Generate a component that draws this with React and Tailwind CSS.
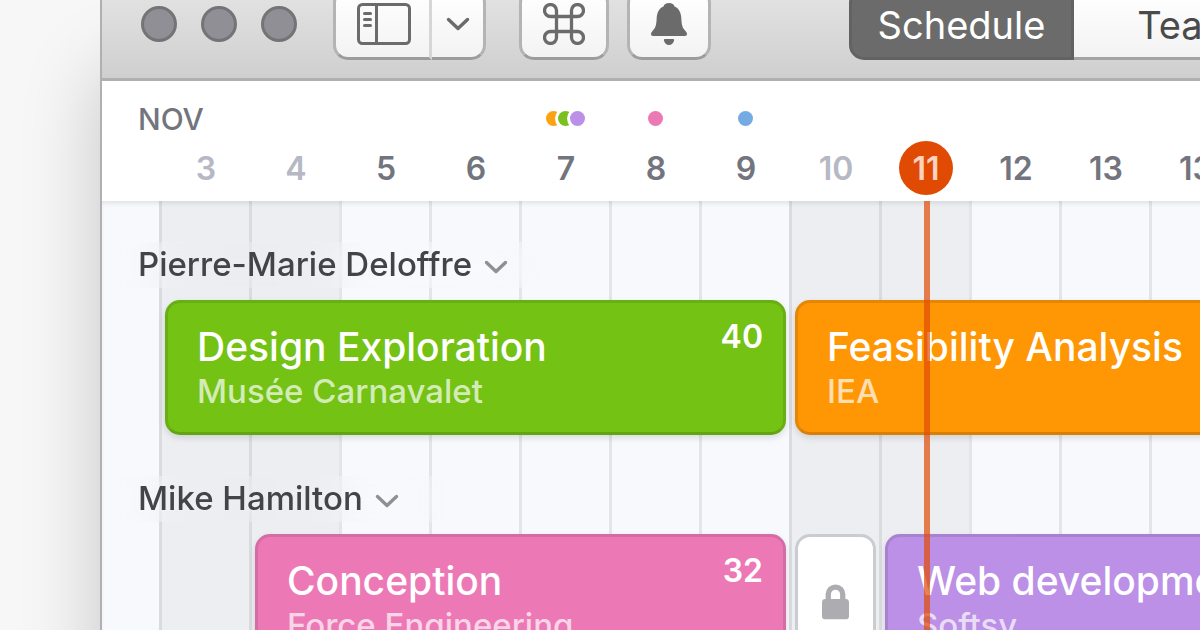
import React, { useState } from 'react'

const days = [
    { day: 3, off: true },
    { day: 4, off: true },
    { day: 5 },
    { day: 6 },
    { day: 7, dots: ['bg-[#fca314]', 'bg-[#7ac11f]', 'bg-[#bb90e6]'] },
    { day: 8, dots: ['bg-[#ec79b5]'] },
    { day: 9, dots: ['bg-[#74abe2]'] },
    { day: 10, off: true },
    { day: 11, off: true, today: true },
    { day: 12 },
    { day: 13 },
    { day: 13 },
    { day: 15 },
    { day: 16 },
    { day: 17, off: true },
    { day: 18, off: true }
]

const people = [
    {
        name: 'Pierre-Marie Deloffre',
        tasks: [
            { title: 'Design Exploration', client: 'Musée Carnavalet', hours: 40, span: 'col-[1/8]', color: 'bg-[#73c214]' },
            { title: 'Feasibility Analysis', client: 'IEA', span: 'col-[8/15]', color: 'bg-[#ff9604]' }
        ]
    },
    {
        name: 'Mike Hamilton',
        tasks: [
            { title: 'Conception', client: 'Force Engineering', hours: 32, span: 'col-[2/8]', color: 'bg-[#ec79b5]' },
            { locked: true, span: 'col-[8/9]' },
            { title: 'Web development', client: 'Softsy', span: 'col-[9/15]', color: 'bg-[#bb90e6]' }
        ]
    }
]

const Chevron = () => (
    <svg width="24" height="14" viewBox="0 0 24 14" fill="none" stroke="currentColor" strokeWidth="3.400" strokeLinecap="round" strokeLinejoin="round">
        <path d="M2.500 2.500 12 11.500 21.500 2.500" />
    </svg>
)

const SidebarIcon = () => (
    <svg width="54" height="42" viewBox="0 0 54 42" fill="none" stroke="currentColor" strokeWidth="3" strokeLinecap="round">
        <rect x="1.5" y="1.5" width="51" height="39" rx="4" />
        <path d="M19.500 2v38M7.500 10.500h6M7.500 16.500h6M7.500 22.500h6" />
    </svg>
)

const CommandIcon = () => (
    <svg width="42" height="42" viewBox="0 0 42 42" fill="none" stroke="currentColor" strokeWidth="3.300">
        <path d="M13.500 13.500h15v15h-15zM13.500 13.500v-6a6 6 0 1 0-6 6zM28.500 13.500h6a6 6 0 1 0-6-6zM28.500 28.500v6a6 6 0 1 0 6-6zM13.500 28.500h-6a6 6 0 1 0 6 6z" />
    </svg>
)

const BellIcon = () => (
    <svg width="36" height="42" viewBox="0 0 36 42" fill="currentColor">
        <path d="M18 0c-3 0-5 1.500-5.500 3.500C8 5.500 6 9.500 5.700 15 5.400 22 4.500 25 1.500 28 .5 29 0 30 0 31c0 1.200.8 2 2 2h32c1.200 0 2-.8 2-2 0-1-.5-2-1.500-3-3-3-3.900-6-4.200-13C30 9.500 28 5.500 23.500 3.500 23 1.500 21 0 18 0z" />
        <path d="M14 36h8c.8 0 1.300.6 1.100 1.400C22.500 40 20.500 42 18 42s-4.500-2-5.100-4.600C12.700 36.600 13.200 36 14 36z" />
    </svg>
)

const LockIcon = () => (
    <svg width="27" height="36" viewBox="0 0 28 36" fill="none">
        <path d="M6.500 18v-8a7.500 7.500 0 0 1 15 0v8" stroke="#adacb0" strokeWidth="5.500" />
        <rect y="15" width="28" height="21" rx="3.500" fill="#adacb0" />
    </svg>
)

const toolButton = 'flex items-center justify-center h-[72px] border-[3px] border-[#b4b4b4] border-b-[#9c9c9c] bg-linear-to-b from-white to-[#f3f3f3] text-[#6b6b6b]'

function Toolbar({ tab, setTab }) {
    return (
        <header className="flex items-center h-[111px] shrink-0 pl-[39px] border-b-[3px] border-[#b0b0b0] bg-linear-to-b from-[#e8e8e8] to-[#cfcfcf]">
            <div className="flex gap-6 mr-9 shrink-0">
                <button aria-label="Close" className="size-9 rounded-full border-[3px] border-[#747476] bg-[#908f95]" />
                <button aria-label="Minimize" className="size-9 rounded-full border-[3px] border-[#747476] bg-[#908f95]" />
                <button aria-label="Zoom" className="size-9 rounded-full border-[3px] border-[#747476] bg-[#908f95]" />
            </div>
            <div className="flex mr-[33px] shrink-0">
                <button aria-label="Sidebar" className={`${toolButton} w-[99px] pl-0.5 rounded-l-[15px] border-r-[#d6d6d6]`}><SidebarIcon /></button>
                <button aria-label="Sidebar options" className={`${toolButton} w-[54px] rounded-r-[15px] border-l-0`}><Chevron /></button>
            </div>
            <button aria-label="Shortcuts" className={`${toolButton} w-[90px] mr-[18px] shrink-0 rounded-[15px]`}><CommandIcon /></button>
            <button aria-label="Notifications" className={`${toolButton} w-[84px] mr-[138px] shrink-0 rounded-[15px]`}><BellIcon /></button>
            <div className="flex shrink-0 text-[38px]">
                {['Schedule', 'Team'].map((label) => (
                    <button
                        key={label}
                        onClick={() => setTab(label)}
                        className={`w-[225px] h-[72px] pt-0.5 border-[3px] first:rounded-l-[15px] last:rounded-r-[15px] ${tab === label ? 'border-[#626262] bg-[#6b6b6b] text-white' : 'border-x-0 border-[#b4b4b4] border-b-[#a4a4a4] bg-linear-to-b from-white to-[#f3f3f3] text-[#4a4a4a]'}`}
                    >
                        {label}
                    </button>
                ))}
            </div>
        </header>
    )
}

function Day({ day, off, today, dots = [] }) {
    let tone = off ? 'text-[#b6b8c4]' : 'text-[#73757e]'
    if (today) tone = 'rounded-full bg-[#e04a03] text-[#fbd3c0]'
    return (
        <div className="flex flex-col items-center w-[90px] shrink-0 pl-1">
            <div className="flex items-center h-[75px] -mb-[15px] pr-0.5">
                {dots.map((dot) => (
                    <span key={dot} className={`size-[15px] -ml-[3px] first:ml-0 rounded-full ring-[3px] ring-white ${dot}`} />
                ))}
            </div>
            <span className={`flex items-center justify-center size-[54px] pt-0.5 text-[32px] font-semibold ${tone}`}>{day}</span>
        </div>
    )
}

function Task({ title, client, hours, locked, span, color }) {
    if (locked) {
        return (
            <div className={`${span} flex items-center justify-center h-[135px] ml-1.5 mr-[3px] rounded-[15px] border-[3px] border-[#cbcccf] bg-white`}>
                <LockIcon />
            </div>
        )
    }
    return (
        <article className={`${span} ${color} flex justify-between h-[135px] ml-1.5 mr-[3px] pl-[29px] pr-5 rounded-[15px] border-[3px] border-black/10 border-b-black/15 shadow-[0_3px_6px_rgba(0,0,0,0.12)] text-white whitespace-nowrap`}>
            <div className="pt-[22px]">
                <h3 className="text-[39px] leading-[44px] font-medium">{title}</h3>
                <p className="text-[33px] leading-[44px] font-medium text-white/70">{client}</p>
            </div>
            {hours && <span className="pt-3 text-[32px] leading-[44px] font-semibold">{hours}</span>}
        </article>
    )
}

function Person({ name, tasks }) {
    return (
        <section className="flex flex-col items-start gap-3 pt-[41px]">
            <button className="flex items-center gap-3 h-[46px] ml-3.5 pl-[22px] pr-12 text-[33px] font-medium text-[#434447] whitespace-nowrap backdrop-blur-[20px] mask-[linear-gradient(to_right,transparent,black_20px,black_calc(100%-20px),transparent)]">
                {name}
                <span className="pt-1 text-[#8f9094]"><Chevron /></span>
            </button>
            <div className="grid grid-cols-[repeat(16,90px)] pl-[57px]">
                {tasks.map((task, i) => <Task key={i} {...task} />)}
            </div>
        </section>
    )
}

export default function App() {
    const [tab, setTab] = useState('Schedule')

    return (
        <div className="flex items-start h-screen overflow-hidden bg-[#f7f7f7] pl-[100px] font-['Inter',sans-serif]">
            <main className="flex flex-col flex-1 min-w-0 -mt-[30px] border-l-2 border-[#b0b0b3] bg-white shadow-[0_100px_75px_rgba(0,0,0,0.2)] overflow-hidden">
                <Toolbar tab={tab} setTab={setTab} />
                <div className="grid h-[120px] shrink-0">
                    <h2 className="[grid-area:1/1] pl-9 pt-4 text-[30px] leading-[44px] font-medium text-[#73757e]">NOV</h2>
                    <div className="[grid-area:1/1] flex pl-[57px]">
                        {days.map((d, i) => <Day key={i} {...d} />)}
                    </div>
                </div>
                <div className="relative grid min-h-[calc(100vh-171px)] bg-[#f8f9fd] overflow-hidden">
                    <div className="[grid-area:1/1] flex pl-[57px]">
                        {days.map((d, i) => (
                            <div key={i} className={`w-[90px] shrink-0 border-l-[3px] border-black/8 ${d.off ? 'bg-[#edeef1]' : ''}`} />
                        ))}
                    </div>
                    <div className="[grid-area:1/1] pb-10 shadow-[inset_0_4px_5px_-2px_rgba(0,0,0,0.1)]">
                        {people.map((person) => <Person key={person.name} {...person} />)}
                    </div>
                    {/* current time */}
                    <div className="absolute inset-y-0 left-[822px] w-1.5 bg-[#e04a03]/70" />
                </div>
            </main>
        </div>
    )
}
